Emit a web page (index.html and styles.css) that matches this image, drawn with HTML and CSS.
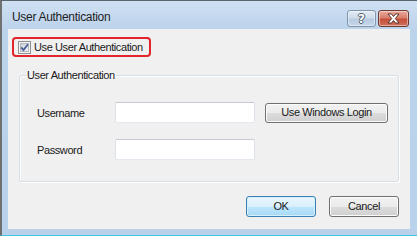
FILE: index.html
```html
<!DOCTYPE html>
<html>
<head>
<meta charset="utf-8">
<link rel="stylesheet" href="styles.css">
</head>
<body>
<div class="window">
  <div class="titlebar">
    <span class="title">User Authentication</span>
    <div class="caption-btns">
      <span class="cap help">?</span>
      <span class="cap close">
        <svg width="13" height="11" viewBox="0 0 13 11"><path d="M1 1 H4.5 L6.5 3.5 L8.5 1 H12 L8.3 5.5 L12 10 H8.5 L6.5 7.5 L4.5 10 H1 L4.7 5.5 Z" fill="#fff" stroke="#4a2a24" stroke-width="0.9" stroke-linejoin="round"/></svg>
      </span>
    </div>
  </div>
  <div class="client">
    <label class="check-row">
      <span class="checkbox">
        <svg width="13" height="13" viewBox="0 0 13 13">
          <defs>
            <linearGradient id="cb" x1="0" y1="0" x2="1" y2="1">
              <stop offset="0" stop-color="#cbcfd5"/>
              <stop offset="1" stop-color="#f6f6f6"/>
            </linearGradient>
          </defs>
          <rect x="0.5" y="0.5" width="12" height="12" fill="#f4f4f4" stroke="#8e8f8f"/>
          <rect x="2.5" y="2.5" width="8" height="8" fill="url(#cb)" stroke="#b5b8be"/>
          <path d="M3.2 6.3 L5.5 9 L10 3.2" fill="none" stroke="#4a5f97" stroke-width="1.8"/>
        </svg>
      </span>
      <span class="check-text">Use User Authentication</span>
    </label>
    <fieldset class="group">
      <legend class="group-title">User Authentication</legend>
      <div class="row first">
        <span class="lbl">Username</span>
        <span class="input"></span>
        <span class="btn wide">Use Windows Login</span>
      </div>
      <div class="row">
        <span class="lbl">Password</span>
        <span class="input"></span>
      </div>
    </fieldset>
    <div class="actions">
      <span class="btn default">OK</span>
      <span class="btn">Cancel</span>
    </div>
  </div>
</div>
</body>
</html>
```
FILE: styles.css
```css
html, body {
  margin: 0;
  padding: 0;
  background: #ffffff;
}

.window {
  width: 417px;
  height: 236px;
  box-sizing: border-box;
  border-top: 1px solid #5b6570;
  border-left: 2px solid #6f7070;
  border-bottom: 1px solid #3fc4e4;
  background: linear-gradient(#cfe0f2 0px, #bcd3ec 28px, #b9d1ea 100%);
  padding: 0 7px 6px 6px;
  display: flex;
  flex-direction: column;
  font-family: "Liberation Sans", Arial, sans-serif;
  font-size: 11px;
  color: #000;
}

.titlebar {
  height: 28px;
  display: flex;
  align-items: flex-start;
  justify-content: space-between;
}

.title {
  font-size: 12px;
  letter-spacing: -0.3px;
  color: #1e1e1e;
  margin: 9px 0 0 4px;
  line-height: 14px;
}

.caption-btns {
  display: flex;
  gap: 2px;
  margin-top: 9px;
  margin-right: 1px;
}

.cap {
  height: 17px;
  box-sizing: border-box;
  border: 1px solid #7f94ad;
  border-radius: 3px;
  display: flex;
  align-items: center;
  justify-content: center;
  box-shadow: inset 0 0 0 1px rgba(255,255,255,0.45);
}

.help {
  width: 29px;
  background: linear-gradient(#e3ecf6 0%, #cfdceb 45%, #b8cbe1 55%, #c6d6e9 100%);
  color: #fff;
  font-family: "DejaVu Sans", sans-serif;
  font-weight: bold;
  font-size: 12px;
  line-height: 12px;
  text-shadow: 1px 0 0 #4d5a6b, -1px 0 0 #4d5a6b, 0 1px 0 #4d5a6b, 0 -1px 0 #4d5a6b;
}

.close {
  width: 31px;
  border-color: #6e3b33;
  background: linear-gradient(#e9a99b 0%, #d9806e 45%, #c4503c 55%, #d0705c 100%);
}

.close svg {
  display: block;
}

.client {
  flex: 1;
  background: #f0f0f0;
  padding: 8px 11px 0 4px;
  display: flex;
  flex-direction: column;
}

.check-row {
  align-self: flex-start;
  width: 139px;
  height: 20px;
  box-sizing: border-box;
  border: 2px solid #e3242b;
  border-radius: 4px;
  display: flex;
  align-items: center;
  padding-left: 4px;
  gap: 3px;
  letter-spacing: -0.4px;
  color: #1a1a1a;
}

.checkbox svg {
  display: block;
}

.check-text {
  line-height: 13px;
}

.group {
  margin: 12px 0 0 7px;
  padding: 0 0 21px 6px;
  border: 1px solid #d5dfe5;
  border-radius: 3px;
  box-shadow: inset 1px 1px 0 #ffffff, 1px 1px 0 #ffffff;
  min-width: 0;
}

.group-title {
  padding: 0 1px;
  line-height: 13px;
  letter-spacing: -0.4px;
  color: #1a1a1a;
}

.row {
  display: flex;
  align-items: center;
  margin: 16px 0 0 11px;
  height: 21px;
  color: #1a1a1a;
}

.row.first {
  margin-top: 20px;
}

.lbl {
  width: 78px;
  letter-spacing: -0.4px;
}

.input {
  width: 140px;
  height: 21px;
  box-sizing: border-box;
  background: #ffffff;
  border: 1px solid;
  border-color: #c5cad3 #dde2e8 #e3e9ef #dde2e8;
  border-radius: 2px;
}

.btn {
  width: 70px;
  height: 21px;
  box-sizing: border-box;
  border: 1px solid #707070;
  border-radius: 3px;
  background: linear-gradient(#f2f2f2 0%, #ebebeb 50%, #dddddd 50%, #cfcfcf 100%);
  box-shadow: inset 0 0 0 1px #fbfbfb;
  display: flex;
  align-items: center;
  justify-content: center;
  letter-spacing: -0.4px;
  line-height: 13px;
  color: #1a1a1a;
}

.btn.wide {
  width: 123px;
  height: 20px;
  margin-left: 10px;
}

.btn.default {
  border-color: #3c7fb1;
  background: linear-gradient(#eaf6fd 0%, #d9f0fc 50%, #bee6fd 50%, #a7d9f5 100%);
  box-shadow: inset 0 0 0 1px #d6effc;
}

.actions {
  display: flex;
  justify-content: flex-end;
  gap: 13px;
  margin-top: 14px;
}
```
